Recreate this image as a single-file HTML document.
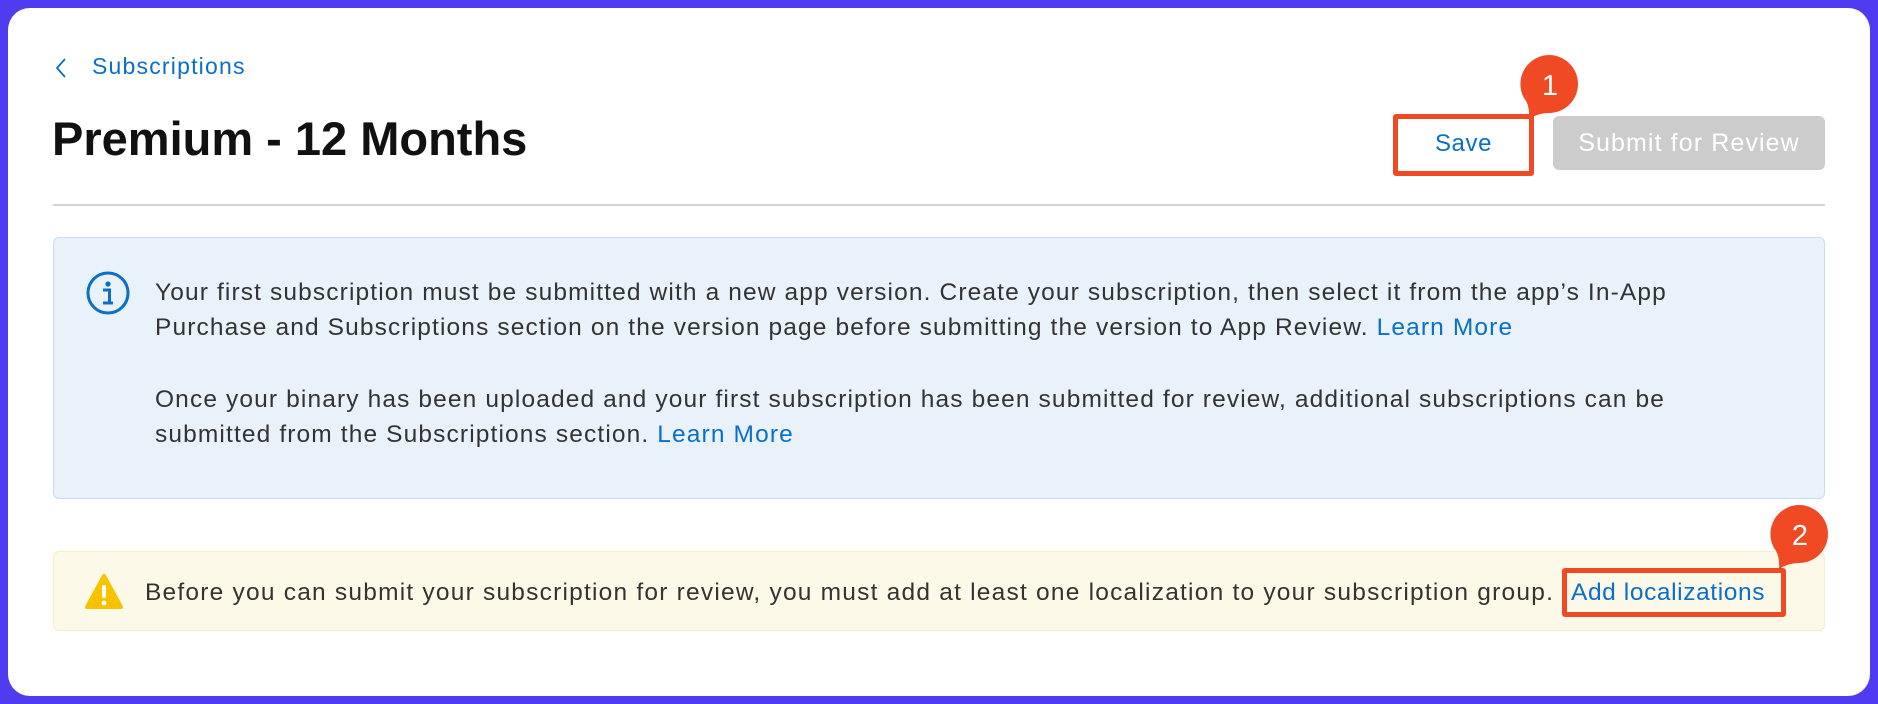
<!DOCTYPE html>
<html><head><meta charset="utf-8"><style>
*{margin:0;padding:0;box-sizing:border-box}
body{width:1878px;height:704px;background:#4f3cf0;font-family:"Liberation Sans",sans-serif;position:relative;overflow:hidden}
.card{position:absolute;left:8px;top:8px;width:1862px;height:688px;background:#fff;border-radius:22px}
.a{position:absolute}
.txt{font-size:24.5px;color:#333;line-height:35px;white-space:nowrap;letter-spacing:1.13px}
.blue{color:#0a6fc9}
</style></head><body>
<div class="card"></div>
<svg class="a" style="left:54px;top:57px" width="14" height="22"><path d="M11 2 L3 11 L11 20" fill="none" stroke="#0a6fc9" stroke-width="1.8"/></svg>
<div class="a blue" style="left:92px;top:53px;font-size:23px;letter-spacing:1.2px">Subscriptions</div>
<div class="a" style="left:52px;top:111px;font-size:47px;font-weight:bold;color:#111;letter-spacing:0px">Premium - 12 Months</div>

<div class="a" style="left:1393px;top:114px;width:141px;height:62px;border:5px solid #f04a25;border-radius:3px;background:#fff"></div>
<div class="a blue" style="left:1393px;top:130px;width:141px;text-align:center;font-size:24px;letter-spacing:0.6px">Save</div>
<div class="a" style="left:1553px;top:116px;width:272px;height:54px;background:#cccccc;border-radius:6px;color:#fff;font-size:25px;text-align:center;line-height:54px;letter-spacing:1.1px">Submit for Review</div>
<svg class="a" style="left:1518px;top:53px" width="64" height="70"><path d="M31 2 A29 29 0 0 1 31 60 Q20 60 11 66 Q12 52 6 45 A29 29 0 0 1 31 2Z" fill="#f04a25"/><text x="32" y="42" font-size="29" fill="#fff" text-anchor="middle" font-family="Liberation Sans">1</text></svg>

<div class="a" style="left:53px;top:204px;width:1772px;height:2px;background:#d4d4d4"></div>

<div class="a" style="left:53px;top:237px;width:1772px;height:262px;background:#e9f2fb;border:1.5px solid #c5ddf3;border-radius:6px"></div>
<svg class="a" style="left:85px;top:270px" width="46" height="46"><circle cx="23" cy="23" r="20" fill="none" stroke="#0a6fc9" stroke-width="3"/><circle cx="23" cy="14" r="2.6" fill="#0a6fc9"/><path d="M18 20 H24.5 V32 M18 33 H28" fill="none" stroke="#0a6fc9" stroke-width="3"/></svg>
<div class="a txt" style="left:155px;top:275px">Your first subscription must be submitted with a new app version. Create your subscription, then select it from the app’s In-App<br>Purchase and Subscriptions section on the version page before submitting the version to App Review. <span class="blue">Learn More</span></div>
<div class="a txt" style="left:155px;top:382px">Once your binary has been uploaded and your first subscription has been submitted for review, additional subscriptions can be<br>submitted from the Subscriptions section. <span class="blue">Learn More</span></div>

<div class="a" style="left:53px;top:551px;width:1772px;height:80px;background:#fdf9e9;border:1.5px solid #f8eec0;border-radius:6px"></div>
<svg class="a" style="left:84px;top:573px" width="40" height="38"><path d="M20 3 L37 34 H3 Z" fill="#f7c300" stroke="#f7c300" stroke-width="4" stroke-linejoin="round"/><rect x="18" y="12" width="4" height="13" rx="2" fill="#fff"/><circle cx="20" cy="30" r="2.4" fill="#fff"/></svg>
<div class="a" style="left:1562px;top:568px;width:224px;height:49px;border:5px solid #f04a25;border-radius:3px"></div>
<div class="a txt" style="left:145px;top:575px;letter-spacing:1.22px">Before you can submit your subscription for review, you must add at least one localization to your subscription group.</div>
<div class="a txt" style="left:1571px;top:575px;letter-spacing:0.6px;color:#0a6fc9">Add localizations</div>
<svg class="a" style="left:1768px;top:503px" width="64" height="70"><path d="M31 2 A29 29 0 0 1 31 60 Q20 60 11 66 Q12 52 6 45 A29 29 0 0 1 31 2Z" fill="#f04a25"/><text x="32" y="42" font-size="29" fill="#fff" text-anchor="middle" font-family="Liberation Sans">2</text></svg>
</body></html>
